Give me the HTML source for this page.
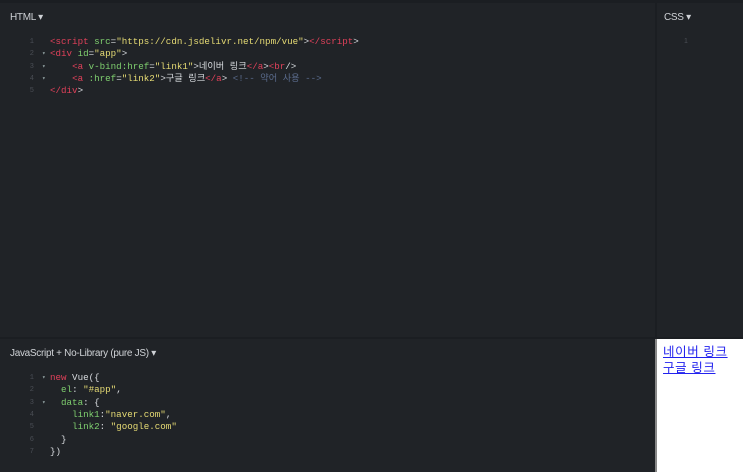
<!DOCTYPE html>
<html><head><meta charset="utf-8"><style>
*{margin:0;padding:0;box-sizing:border-box}
body{width:743px;height:472px;background:#1b1e22;overflow:hidden;position:relative;font-family:"Liberation Sans","Noto Sans CJK KR",sans-serif}
.p{position:absolute;background:#202327}
.h{position:absolute;left:10px;top:12px;font-size:10px;color:#cfd2d6;letter-spacing:-0.3px}
.code{position:absolute;left:0;font-family:"Liberation Mono","Noto Sans CJK KR",monospace;font-size:9.2px;line-height:12.3px;white-space:pre;color:#d8dbdf}
.ln{position:absolute;left:22px;width:12px;text-align:right;color:#4a4e55;font-size:7px}
.f{position:absolute;left:42px;color:#9aa;font-size:6px}
.l{position:absolute;left:0;height:12.3px;width:600px}
.t{position:absolute;left:50px}
.r{color:#e0415a}.g{color:#7fcf6f}.y{color:#e6db74}.c{color:#5a6b8c}
a{color:#2222ee;text-decoration:underline;letter-spacing:0.6px}
</style></head><body>
<div class="p" style="left:0;top:3px;width:655px;height:334px"></div>
<div class="p" style="left:657px;top:3px;width:86px;height:334px"></div>
<div class="p" style="left:0;top:339px;width:655px;height:133px"></div>
<div style="position:absolute;left:657px;top:339px;width:86px;height:133px;background:#fff"></div>
<div style="position:absolute;left:655px;top:339px;width:2px;height:133px;background:#888"></div>

<div class="h">HTML ▾</div>
<div class="h" style="left:664px">CSS ▾</div>
<div class="h" style="top:348px">JavaScript + No-Library (pure JS) ▾</div>
<div style="position:absolute;left:684px;top:38px;font-size:7px;color:#4a4e55">1</div>

<div class="code" style="top:36px">
<div class="l" style="top:0"><span class="ln">1</span><span class="t"><span class="r">&lt;script</span> <span class="g">src</span>=<span class="y">"https://cdn.jsdelivr.net/npm/vue"</span>&gt;<span class="r">&lt;/script</span>&gt;</span></div>
<div class="l" style="top:12.3px"><span class="ln">2</span><span class="f">▾</span><span class="t"><span class="r">&lt;div</span> <span class="g">id</span>=<span class="y">"app"</span>&gt;</span></div>
<div class="l" style="top:24.6px"><span class="ln">3</span><span class="f">▾</span><span class="t">    <span class="r">&lt;a</span> <span class="g">v-bind:href</span>=<span class="y">"link1"</span>&gt;네이버 링크<span class="r">&lt;/a</span>&gt;<span class="r">&lt;br</span>/&gt;</span></div>
<div class="l" style="top:36.9px"><span class="ln">4</span><span class="f">▾</span><span class="t">    <span class="r">&lt;a</span> <span class="g">:href</span>=<span class="y">"link2"</span>&gt;구글 링크<span class="r">&lt;/a</span>&gt; <span class="c">&lt;!-- 약어 사용 --&gt;</span></span></div>
<div class="l" style="top:49.2px"><span class="ln">5</span><span class="t"><span class="r">&lt;/div</span>&gt;</span></div>
</div>

<div class="code" style="top:372px">
<div class="l" style="top:0"><span class="ln">1</span><span class="f">▾</span><span class="t"><span class="r">new</span> Vue({</span></div>
<div class="l" style="top:12.3px"><span class="ln">2</span><span class="t">  <span class="g">el</span>: <span class="y">"#app"</span>,</span></div>
<div class="l" style="top:24.6px"><span class="ln">3</span><span class="f">▾</span><span class="t">  <span class="g">data</span>: {</span></div>
<div class="l" style="top:36.9px"><span class="ln">4</span><span class="t">    <span class="g">link1</span>:<span class="y">"naver.com"</span>,</span></div>
<div class="l" style="top:49.2px"><span class="ln">5</span><span class="t">    <span class="g">link2</span>: <span class="y">"google.com"</span></span></div>
<div class="l" style="top:61.5px"><span class="ln">6</span><span class="t">  }</span></div>
<div class="l" style="top:73.8px"><span class="ln">7</span><span class="t">})</span></div>
</div>

<div style="position:absolute;left:663px;top:344px;font-size:12.5px;line-height:16px;font-family:'Liberation Sans','Noto Sans CJK KR',sans-serif">
<a>네이버 링크</a><br><a>구글 링크</a></div>
</body></html>
